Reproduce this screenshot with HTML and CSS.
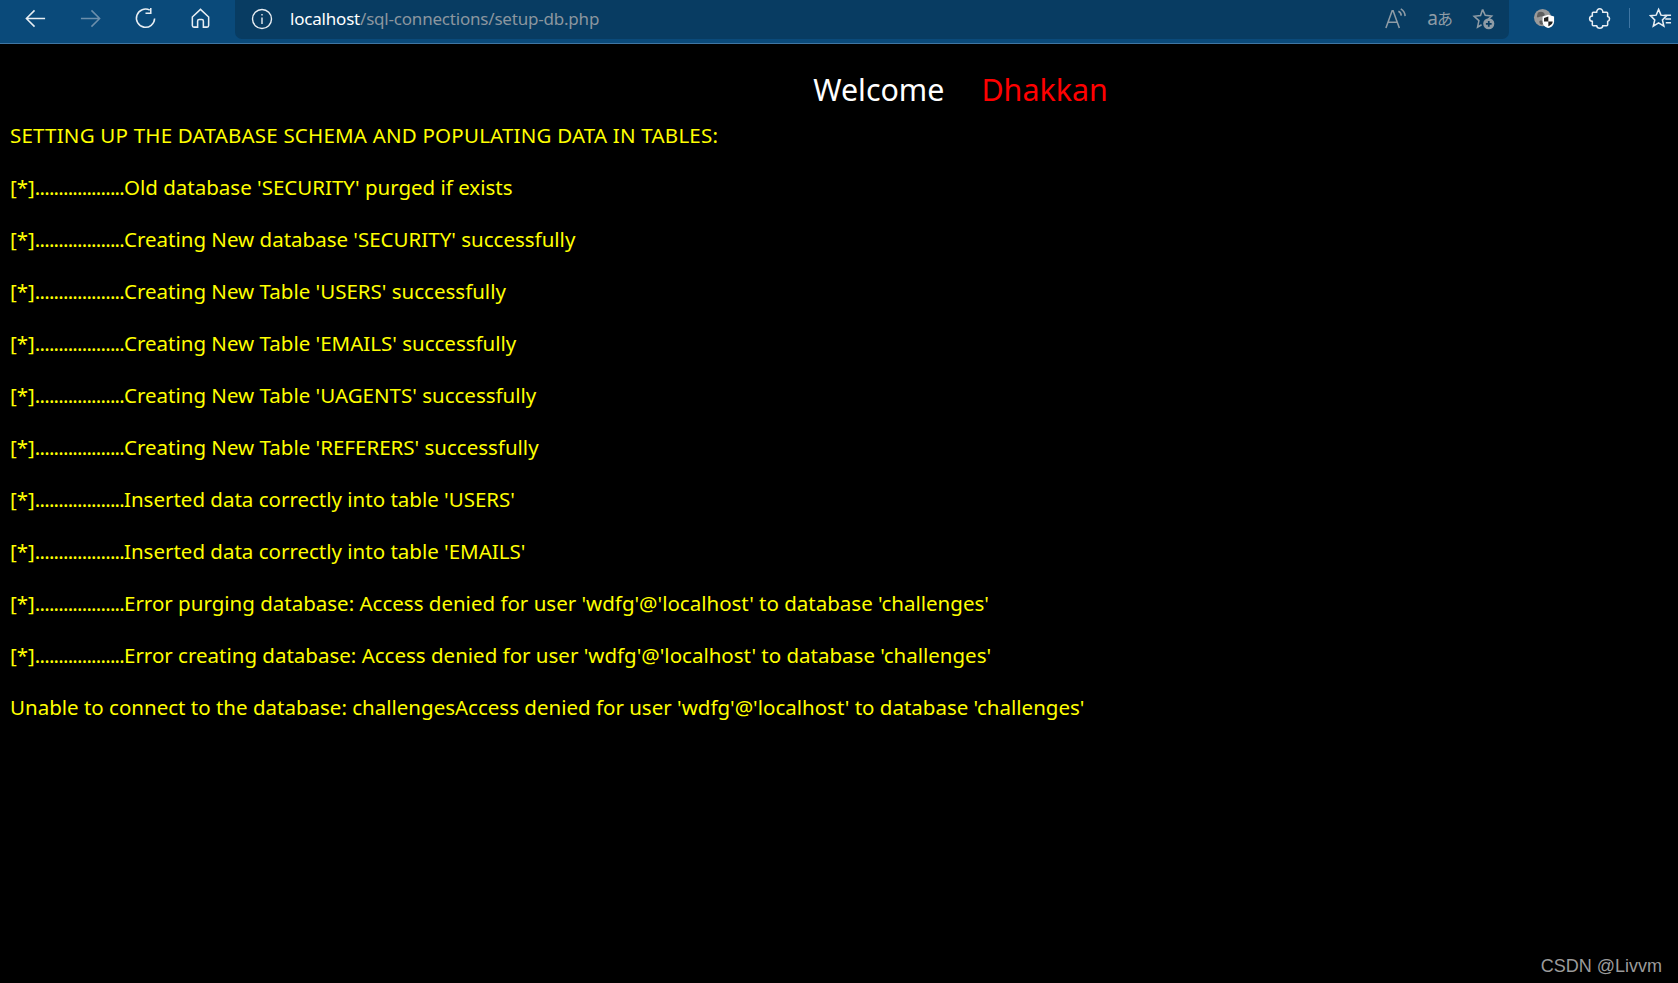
FILE: index.html
```html
<!DOCTYPE html>
<html lang="en">
<head>
<meta charset="utf-8">
<title>SETUP DB</title>
<link rel="stylesheet" href="styles.css">
</head>
<body>
<header class="toolbar">
  <div class="nav">
    <svg class="icon" viewBox="0 0 24 24"><path d="M22 12H3M11 3.500 2.500 12l8.500 8.500"/></svg>
    <svg class="icon dim" viewBox="0 0 24 24"><path d="M2 12h19M13 3.500l8.500 8.500-8.500 8.500"/></svg>
    <svg class="icon" viewBox="0 0 24 24"><path d="M16.500 3.300A9.500 9.500 0 1 0 21.500 12M17.500 1v5.500H12"/></svg>
    <svg class="icon" viewBox="0 0 24 24"><path d="M3.500 10.500 12 2.500l8.500 8v8.800A1.700 1.700 0 0 1 18.800 21H15v-6.500a1.500 1.500 0 0 0-1.500-1.500h-3A1.500 1.500 0 0 0 9 14.500V21H5.200a1.700 1.700 0 0 1-1.700-1.700z"/></svg>
  </div>
  <div class="omnibox">
    <svg class="info" viewBox="0 0 22 22"><circle cx="11" cy="11" r="9.500"/><path d="M11 9.500V16M11 6v1.500"/></svg>
    <span class="url"><span class="host">localhost</span>/sql-connections/setup-db.php</span>
    <div class="omni-actions">
      <svg class="icon gray" viewBox="0 0 24 24"><path d="M2 22 8.500 4h1L16 22M4.500 16h9.500M15 4.500a5 5 0 0 1 3 4.500M17.500 2a9 9 0 0 1 4.500 7.500"/></svg>
      <span class="translate">a<span class="kana">あ</span></span>
      <svg class="icon gray" viewBox="0 0 24 24"><path d="M11 2.500l2.800 6.200 6.700.7-3.500 3.200M10 18.500l-4.200 2.500 1.400-6.800-5-4.600 6.700-.8L11 2.500"/><circle class="badge" cx="17.500" cy="17.500" r="5.800"/><path class="plus" d="M17.500 14.500v6M14.500 17.500h6"/></svg>
    </div>
  </div>
  <div class="tools">
    <svg class="shield" viewBox="0 0 24 24"><circle class="globe" cx="10" cy="11" r="9"/><path class="land" d="M5 6c3-2 6-1 7 1s-2 3-4 3-3 2-4 0zM8 14c2 0 4 1 3 3s-3 2-4 0 0-3 1-3z"/><path class="guard" d="M16 8l6 2v5c0 4-3 6-6 7-3-1-6-3-6-7v-5z"/><path class="guard-dark" d="M16 10v5h-4.500v-3.500zM16 15h4.500c0 3-2.500 4-4.500 5z"/></svg>
    <svg class="icon" viewBox="0 0 24 24"><path d="M9 5.500C9 3.500 10.500 1.800 12.200 1.800S15.500 3.500 15.500 5.500H19.500c.6 0 1 .4 1 1v3.300c1.500.3 2 1.300 2 2.500s-.8 2.400-2 2.700v3.500c0 .6-.4 1-1 1h-4c-.2 1.700-1.500 2.700-3.200 2.700S9.300 21.200 9 19.500H5.500c-.6 0-1-.4-1-1V15c-1.700-.2-2.800-1.300-2.800-2.800S2.800 9.700 4.500 9.500v-3c0-.6.400-1 1-1z"/></svg>
    <span class="divider"></span>
    <svg class="icon" viewBox="0 0 24 24"><path d="M10 2.500l2.500 6 6 .5-4.500 4.500 1.500 6.500-5.500-3.500L4.500 20 6 13.500 1.500 9l6-.5zM17 12.500h6M17.500 16.500h5.500M16 8.500h7"/></svg>
  </div>
</header>
<main class="page">
  <div class="welcome"><span class="who">Welcome</span><span class="name">Dhakkan</span></div>
  <div class="log">
    <p class="title">SETTING UP THE DATABASE SCHEMA AND POPULATING DATA IN TABLES:</p>
    <p>[*]<span class="dots">...................</span>Old database 'SECURITY' purged if exists</p>
    <p>[*]<span class="dots">...................</span>Creating New database 'SECURITY' successfully</p>
    <p>[*]<span class="dots">...................</span>Creating New Table 'USERS' successfully</p>
    <p>[*]<span class="dots">...................</span>Creating New Table 'EMAILS' successfully</p>
    <p>[*]<span class="dots">...................</span>Creating New Table 'UAGENTS' successfully</p>
    <p>[*]<span class="dots">...................</span>Creating New Table 'REFERERS' successfully</p>
    <p>[*]<span class="dots">...................</span>Inserted data correctly into table 'USERS'</p>
    <p>[*]<span class="dots">...................</span>Inserted data correctly into table 'EMAILS'</p>
    <p>[*]<span class="dots">...................</span>Error purging database: Access denied for user 'wdfg'@'localhost' to database 'challenges'</p>
    <p>[*]<span class="dots">...................</span>Error creating database: Access denied for user 'wdfg'@'localhost' to database 'challenges'</p>
    <p>Unable to connect to the database: challengesAccess denied for user 'wdfg'@'localhost' to database 'challenges'</p>
  </div>
</main>
<div class="watermark">CSDN @Livvm</div>
</body>
</html>
```
FILE: styles.css
```css
* { box-sizing: border-box; }
html, body { margin: 0; height: 100%; }
body {
  background: #000;
  font-family: "Noto Sans", "Open Sans", sans-serif;
  overflow: hidden;
  position: relative;
}
.toolbar {
  height: 44px;
  background: #0a4a7a;
  border-bottom: 1px solid #3f76a3;
  display: flex;
  align-items: flex-start;
  padding-left: 24px;
}
.nav {
  display: flex;
  gap: 32px;
  width: 211px;
  height: 38px;
  padding-bottom: 2px;
  align-items: center;
}
.icon {
  width: 23px;
  height: 23px;
  fill: none;
  stroke: #e8eef3;
  stroke-width: 1.6;
  flex: none;
}
.icon.dim { stroke: #6c8fac; }
.icon.gray { stroke: #8f9ca6; }
.omnibox {
  flex: none;
  width: 1274px;
  height: 39px;
  background: #083c62;
  border-radius: 0 0 7px 7px;
  display: flex;
  align-items: center;
  padding: 0 0 2px 16px;
}
.info {
  width: 22px;
  height: 22px;
  fill: none;
  stroke: #e8eef3;
  stroke-width: 1.4;
  flex: none;
}
.url {
  margin-left: 17px;
  font-size: 17px;
  letter-spacing: -0.2px;
  color: #8b969f;
  flex: 1;
}
.host { color: #fff; }
.omni-actions {
  display: flex;
  align-items: center;
  gap: 20px;
  padding-right: 14px;
}
.translate {
  font-size: 19px;
  color: #8f9ca6;
  line-height: 1;
  letter-spacing: -1px;
}
.kana { font-family: "Noto Sans CJK JP", sans-serif; font-size: 16px; }
.badge { fill: #8f9ca6; stroke: none; }
.plus { stroke: #083c62; stroke-width: 1.8; }
.tools {
  display: flex;
  align-items: center;
  height: 38px;
  padding: 0 0 2px 24px;
  gap: 32px;
  flex: 1;
}
.shield { width: 23px; height: 23px; flex: none; }
.globe { fill: #9a9a9a; }
.land { fill: #5e5e5e; }
.guard { fill: #fff; }
.guard-dark { fill: #222; }
.divider {
  width: 1px;
  height: 20px;
  background: #3f76a3;
  margin: 0 -13px 0 -14px;
}
.page { padding: 0 10px; }
.welcome {
  display: flex;
  justify-content: center;
  gap: 37px;
  padding-left: 243px;
  padding-top: 25px;
  font-size: 30.400px;
  line-height: 41px;
}
.who { color: #fff; }
.name { color: #f00; }
.log { margin-top: 12px; }
.log p {
  margin: 0 0 26px;
  color: #ff0;
  font-size: 20.500px;
  line-height: 26px;
  white-space: nowrap;
}
.log .title { letter-spacing: 0.210px; }
.dots { letter-spacing: -0.800px; }
.watermark {
  position: absolute;
  right: 16px;
  bottom: 6px;
  font-family: "Liberation Sans", Arial, sans-serif;
  font-size: 18px;
  color: #9b9b9b;
}
```
